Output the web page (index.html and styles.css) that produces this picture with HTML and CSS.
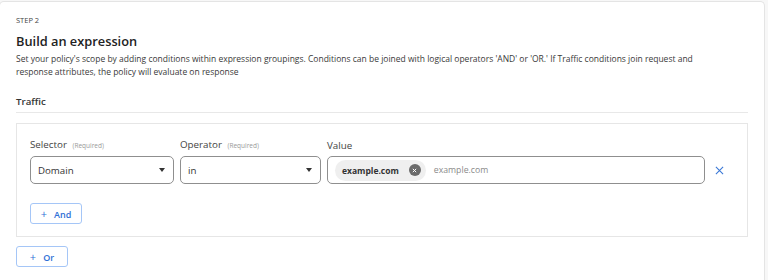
FILE: index.html
```html
<!DOCTYPE html>
<html lang="en">
<head>
    <meta charset="UTF-8">
    <title>Build an expression</title>
    <link rel="stylesheet" href="styles.css">
</head>
<body>
    <div class="card">
        <div class="step">STEP 2</div>
        <h2>Build an expression</h2>
        <p class="desc">Set your policy's scope by adding conditions within expression groupings. Conditions can be joined with logical operators 'AND' or 'OR.' If Traffic conditions join request and response attributes, the policy will evaluate on response</p>

        <h3 class="section">Traffic</h3>

        <div class="group">
            <div class="row">
                <div class="field selector">
                    <label>Selector <span class="req">(Required)</span></label>
                    <div class="select">Domain <span class="caret"></span></div>
                </div>
                <div class="field operator">
                    <label>Operator <span class="req">(Required)</span></label>
                    <div class="select">in <span class="caret"></span></div>
                </div>
                <div class="field value">
                    <label>Value</label>
                    <div class="multi">
                        <span class="chip">example.com
                            <span class="chip-x">
                                <svg width="5" height="5" viewBox="0 0 6 6"><path d="M1 1L5 5M5 1L1 5" stroke="#fff" stroke-width="1.2"/></svg>
                            </span>
                        </span>
                        <span class="placeholder">example.com</span>
                    </div>
                </div>
                <button class="remove">
                    <svg width="9" height="9" viewBox="0 0 10 10"><path d="M1 1L9 9M9 1L1 9" stroke="#3a78d6" stroke-width="1.2"/></svg>
                </button>
            </div>
            <button class="btn-add"><span class="plus">+</span>And</button>
        </div>

        <button class="btn-add btn-or"><span class="plus">+</span>Or</button>
    </div>
</body>
</html>
```

FILE: styles.css
```css
body {
    margin: 0;
    padding: 0;
    background-color: #f7f7f7;
    font-family: "Open Sans", "Noto Sans", sans-serif;
    color: #313131;
    overflow: hidden;
}

.card {
    width: 766px;
    height: 279px;
    margin: 1px 0 0 -1px;
    padding: 13px 16px 0 16px;
    background-color: #fff;
    border: 1px solid #e4e4e4;
    border-bottom: none;
    border-radius: 5px 5px 0 0;
    box-sizing: border-box;
}

.step {
    font-size: 7.5px;
    line-height: 10px;
    color: #444;
}

h2 {
    margin: 7px 0 0;
    font-size: 12.8px;
    line-height: 18px;
    font-weight: 600;
    color: #222;
}

.desc {
    margin: 2px 0 0;
    font-size: 8.5px;
    line-height: 13px;
    color: #3a3a3a;
    max-width: 712px;
}

.section {
    margin: 16px 0 0;
    padding-bottom: 3px;
    font-size: 9.7px;
    line-height: 15px;
    font-weight: 600;
    color: #333;
    border-bottom: 1px solid #e8e8e8;
}

.group {
    margin-top: 10px;
    border: 1px solid #e6e6e6;
    padding: 14px 13px 12px;
}

.row {
    display: flex;
    align-items: flex-end;
    gap: 6px;
}

.field {
    flex-shrink: 0;
}

.field label {
    display: block;
    font-size: 9.8px;
    line-height: 14px;
    color: #444;
    margin-bottom: 3px;
}

.req {
    font-size: 6.5px;
    color: #999;
    margin-left: 3px;
}

.selector { width: 144px; }
.operator { width: 141px; }
.value { width: 378px; }

.select, .multi {
    height: 28px;
    box-sizing: border-box;
    border: 1px solid #8f8f8f;
    border-radius: 5px;
    display: flex;
    align-items: center;
    font-size: 9.7px;
    color: #333;
}

.select {
    justify-content: space-between;
    padding: 0 8px 0 7px;
}

.caret {
    width: 0;
    height: 0;
    border-left: 3px solid transparent;
    border-right: 3px solid transparent;
    border-top: 4px solid #333;
}

.multi {
    padding: 0 7px;
    gap: 8px;
}

.chip {
    display: flex;
    align-items: center;
    gap: 10px;
    height: 21px;
    padding: 0 5px 0 7px;
    background-color: #efefef;
    border-radius: 11px;
    font-weight: 700;
    font-size: 8.5px;
    color: #333;
}

.chip-x {
    width: 12px;
    height: 12px;
    border-radius: 50%;
    background-color: #6a6a6a;
    display: flex;
    align-items: center;
    justify-content: center;
}

.placeholder {
    color: #8a8a8a;
    font-size: 8.7px;
}

.remove {
    background: none;
    border: none;
    padding: 0;
    margin-left: 4px;
    height: 28px;
    width: 10px;
    display: flex;
    align-items: center;
}

.btn-add {
    display: block;
    margin-top: 19px;
    width: 52px;
    height: 21px;
    padding: 0;
    background-color: #fff;
    border: 1px solid #a5c6f7;
    border-radius: 3px;
    font-family: inherit;
    font-size: 9px;
    font-weight: 600;
    color: #2f6fd6;
    text-align: center;
}

.plus {
    font-weight: 400;
    font-size: 11px;
    margin-right: 7px;
}

.btn-or {
    margin-top: 9px;
}
```
